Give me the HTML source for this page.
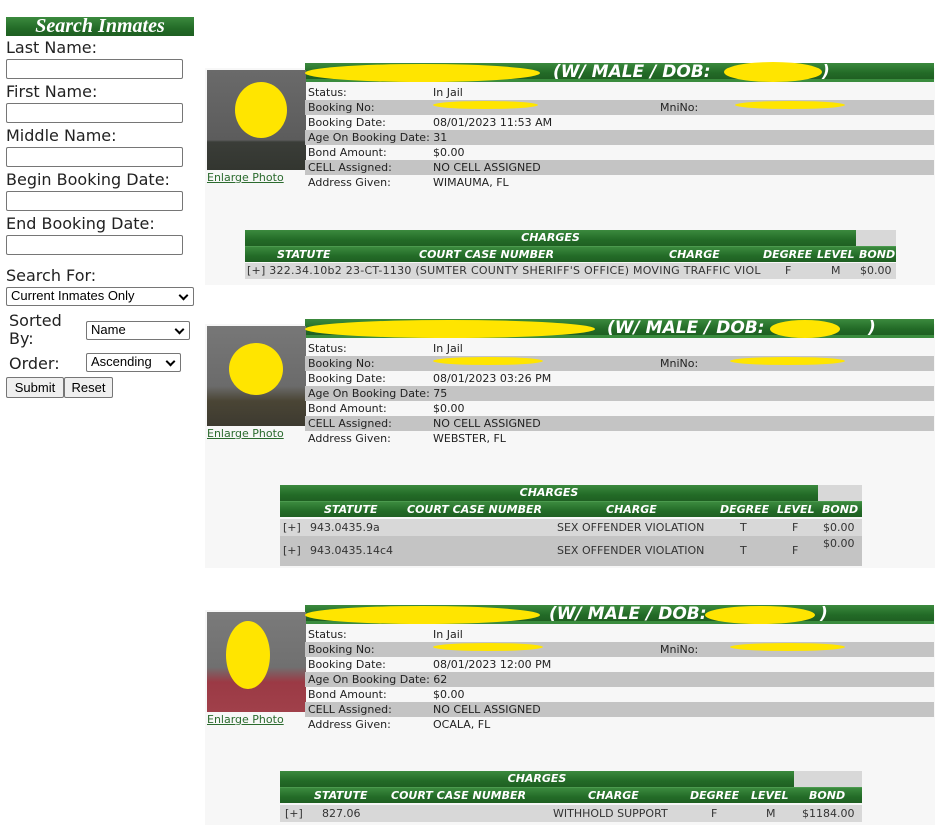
<!DOCTYPE html>
<html><head><meta charset="utf-8"><style>
*{margin:0;padding:0;box-sizing:border-box}
body{width:945px;height:825px;position:relative;background:#fff;font-family:"DejaVu Sans","Liberation Sans",sans-serif;overflow:hidden}
.a{position:absolute}
.lbl{position:absolute;left:6px;font-family:"DejaVu Sans",sans-serif;font-size:16px;color:#222}
.inp{position:absolute;left:6px;width:177px;height:20px;border:1px solid #767676;border-radius:2px;background:#fff}
.sel{position:absolute;border:1px solid #767676;border-radius:2px;background:#fff;font-family:"Liberation Sans",sans-serif;font-size:13px;padding-left:4px;line-height:16px;color:#000}
.sel:after{content:"";position:absolute;right:6px;top:4px;width:5px;height:5px;border-right:2px solid #000;border-bottom:2px solid #000;transform:rotate(45deg)}
.btn{position:absolute;top:377px;height:21px;border:1px solid #767676;border-radius:2px;background:#efefef;font-family:"Liberation Sans",sans-serif;font-size:13px;line-height:19px;text-align:center}
.green{background:linear-gradient(#3b8a3e,#236b27 60%,#1f5f22);}
.hdr{position:absolute;left:305px;width:629px;height:19px;border-bottom:3px solid #3a8c3e;}
.hdrt{position:absolute;color:#fff;font-weight:bold;font-style:italic;font-size:17px;font-family:"DejaVu Sans",sans-serif;top:-1px}
.panel{position:absolute;left:205px;width:730px;background:#f7f7f7}
.row{position:absolute;left:305px;width:629px;height:15px;font-size:11px;color:#222;line-height:15px}
.row.g{background:#c4c4c4}
.row span{position:absolute}
.photo{position:absolute;left:207px;width:99px;height:100px}
.link{position:absolute;left:207px;font-size:11px;color:#2b6b2e;text-decoration:underline}
.blob{position:absolute;background:#ffe500;border-radius:50%}
.ct{position:absolute;font-size:11px;color:#333}
.ct .h1{position:absolute;left:0;height:16px;color:#fff;font-weight:bold;font-style:italic;text-align:center;line-height:16px;font-size:11px}
.ct .h2{position:absolute;left:0;height:16px;color:#fff;font-weight:bold;font-style:italic;line-height:16px;font-size:11px;border-top:1px solid #4b9a4e}
.ct span{position:absolute}
</style></head><body>

<div class="a green" style="left:6px;top:17px;width:188px;height:19px;color:#fff;font-family:'Liberation Serif',serif;font-weight:bold;font-style:italic;font-size:20px;text-align:center;line-height:19px">Search Inmates</div>
<div class="lbl" style="top:38px">Last Name:</div>
<div class="inp" style="top:59px"></div>
<div class="lbl" style="top:82px">First Name:</div>
<div class="inp" style="top:103px"></div>
<div class="lbl" style="top:126px">Middle Name:</div>
<div class="inp" style="top:147px"></div>
<div class="lbl" style="top:170px">Begin Booking Date:</div>
<div class="inp" style="top:191px"></div>
<div class="lbl" style="top:214px">End Booking Date:</div>
<div class="inp" style="top:235px"></div>
<div class="lbl" style="top:266px">Search For:</div>
<div class="sel" style="left:6px;top:287px;width:188px;height:19px">Current Inmates Only</div>
<div class="lbl" style="top:312px;left:9px;line-height:18px">Sorted<br>By:</div>
<div class="sel" style="left:86px;top:321px;width:104px;height:19px">Name</div>
<div class="lbl" style="top:354px;left:9px">Order:</div>
<div class="sel" style="left:86px;top:353px;width:95px;height:19px">Ascending</div>
<div class="btn" style="left:6px;width:58px">Submit</div>
<div class="btn" style="left:64px;width:49px">Reset</div>

<div class="panel" style="top:68px;height:217px"></div>
<div class="panel" style="top:324px;height:244px"></div>
<div class="panel" style="top:610px;height:215px"></div>

<div class="hdr green" style="top:63px"><div class="hdrt" style="left:248px">(W/ MALE / DOB:</div><div class="hdrt" style="left:517px">)</div></div>
<div class="photo" style="top:70px;background:linear-gradient(#6a6a6a,#5c5c5c 70%,#3a3d38 72%,#333630)"></div>
<div class="blob" style="left:235px;top:82px;width:52px;height:56px"></div>
<div class="link" style="top:171px">Enlarge Photo</div>
<div class="row" style="top:85px"><span style="left:3px">Status:</span><span style="left:128px">In Jail</span></div>
<div class="row g" style="top:100px"><span style="left:3px">Booking No:</span><span style="left:355px">MniNo:</span></div>
<div class="row" style="top:115px"><span style="left:3px">Booking Date:</span><span style="left:128px">08/01/2023 11:53 AM</span></div>
<div class="row g" style="top:130px"><span style="left:3px">Age On Booking Date: 31</span></div>
<div class="row" style="top:145px"><span style="left:3px">Bond Amount:</span><span style="left:128px">$0.00</span></div>
<div class="row g" style="top:160px"><span style="left:3px">CELL Assigned:</span><span style="left:128px">NO CELL ASSIGNED</span></div>
<div class="row" style="top:175px"><span style="left:3px">Address Given:</span><span style="left:128px">WIMAUMA, FL</span></div>
<div class="blob" style="left:305px;top:64px;width:235px;height:18px"></div>
<div class="blob" style="left:724px;top:62px;width:98px;height:20px"></div>
<div class="blob" style="left:433px;top:101px;width:105px;height:8px"></div>
<div class="blob" style="left:735px;top:101px;width:110px;height:8px"></div>

<div class="ct" style="left:245px;top:230px;width:651px;height:50px">
 <div class="h1 green" style="width:611px">CHARGES</div><div style="position:absolute;left:611px;width:40px;height:16px;background:#d8d8d8"></div>
 <div class="h2 green" style="top:16px;width:651px"><span style="left:32px">STATUTE</span><span style="left:174px">COURT CASE NUMBER</span><span style="left:424px">CHARGE</span><span style="left:518px">DEGREE</span><span style="left:572px">LEVEL</span><span style="left:614px">BOND</span></div>
 <div style="position:absolute;top:33px;width:651px;height:16px;background:#d8d8d8;line-height:16px"><span style="left:2px;letter-spacing:0.25px">[+] 322.34.10b2 23-CT-1130 (SUMTER COUNTY SHERIFF'S OFFICE) MOVING TRAFFIC VIOL</span><span style="left:540px">F</span><span style="left:586px">M</span><span style="left:615px">$0.00</span></div>
</div>

<div class="hdr green" style="top:319px"><div class="hdrt" style="left:302px">(W/ MALE / DOB:</div><div class="hdrt" style="left:563px">)</div></div>
<div class="photo" style="top:326px;background:linear-gradient(#777,#6b6b6b 60%,#4a4535 75%,#3d3a30)"></div>
<div class="blob" style="left:229px;top:343px;width:54px;height:52px"></div>
<div class="link" style="top:427px">Enlarge Photo</div>
<div class="row" style="top:341px"><span style="left:3px">Status:</span><span style="left:128px">In Jail</span></div>
<div class="row g" style="top:356px"><span style="left:3px">Booking No:</span><span style="left:355px">MniNo:</span></div>
<div class="row" style="top:371px"><span style="left:3px">Booking Date:</span><span style="left:128px">08/01/2023 03:26 PM</span></div>
<div class="row g" style="top:386px"><span style="left:3px">Age On Booking Date: 75</span></div>
<div class="row" style="top:401px"><span style="left:3px">Bond Amount:</span><span style="left:128px">$0.00</span></div>
<div class="row g" style="top:416px"><span style="left:3px">CELL Assigned:</span><span style="left:128px">NO CELL ASSIGNED</span></div>
<div class="row" style="top:431px"><span style="left:3px">Address Given:</span><span style="left:128px">WEBSTER, FL</span></div>
<div class="blob" style="left:305px;top:320px;width:290px;height:18px"></div>
<div class="blob" style="left:770px;top:320px;width:70px;height:18px"></div>
<div class="blob" style="left:433px;top:357px;width:110px;height:8px"></div>
<div class="blob" style="left:730px;top:357px;width:115px;height:8px"></div>

<div class="ct" style="left:280px;top:485px;width:582px;height:81px">
 <div class="h1 green" style="width:538px">CHARGES</div><div style="position:absolute;left:538px;width:44px;height:16px;background:#d8d8d8"></div>
 <div class="h2 green" style="top:16px;width:582px"><span style="left:44px">STATUTE</span><span style="left:127px">COURT CASE NUMBER</span><span style="left:326px">CHARGE</span><span style="left:440px">DEGREE</span><span style="left:497px">LEVEL</span><span style="left:542px">BOND</span></div>
 <div style="position:absolute;top:34px;width:582px;height:17px;background:#d8d8d8;line-height:17px"><span style="left:3px">[+]</span><span style="left:30px">943.0435.9a</span><span style="left:277px">SEX OFFENDER VIOLATION</span><span style="left:460px">T</span><span style="left:512px">F</span><span style="left:543px">$0.00</span></div>
 <div style="position:absolute;top:51px;width:582px;height:30px;background:#c4c4c4;line-height:30px"><span style="left:3px">[+]</span><span style="left:30px">943.0435.14c4</span><span style="left:277px">SEX OFFENDER VIOLATION</span><span style="left:460px">T</span><span style="left:512px">F</span><span style="left:543px;top:-7px">$0.00</span></div>
</div>

<div class="hdr green" style="top:605px"><div class="hdrt" style="left:244px">(W/ MALE / DOB:</div><div class="hdrt" style="left:515px">)</div></div>
<div class="photo" style="top:612px;background:linear-gradient(#7a7a7a,#707070 55%,#9b3a45 70%,#a0404a)"></div>
<div class="blob" style="left:226px;top:621px;width:44px;height:68px"></div>
<div class="link" style="top:713px">Enlarge Photo</div>
<div class="row" style="top:627px"><span style="left:3px">Status:</span><span style="left:128px">In Jail</span></div>
<div class="row g" style="top:642px"><span style="left:3px">Booking No:</span><span style="left:355px">MniNo:</span></div>
<div class="row" style="top:657px"><span style="left:3px">Booking Date:</span><span style="left:128px">08/01/2023 12:00 PM</span></div>
<div class="row g" style="top:672px"><span style="left:3px">Age On Booking Date: 62</span></div>
<div class="row" style="top:687px"><span style="left:3px">Bond Amount:</span><span style="left:128px">$0.00</span></div>
<div class="row g" style="top:702px"><span style="left:3px">CELL Assigned:</span><span style="left:128px">NO CELL ASSIGNED</span></div>
<div class="row" style="top:717px"><span style="left:3px">Address Given:</span><span style="left:128px">OCALA, FL</span></div>
<div class="blob" style="left:305px;top:606px;width:235px;height:18px"></div>
<div class="blob" style="left:705px;top:606px;width:110px;height:18px"></div>
<div class="blob" style="left:433px;top:643px;width:110px;height:8px"></div>
<div class="blob" style="left:730px;top:643px;width:115px;height:8px"></div>

<div class="ct" style="left:280px;top:771px;width:582px;height:51px">
 <div class="h1 green" style="width:514px">CHARGES</div><div style="position:absolute;left:514px;width:68px;height:16px;background:#d8d8d8"></div>
 <div class="h2 green" style="top:16px;width:582px"><span style="left:34px">STATUTE</span><span style="left:111px">COURT CASE NUMBER</span><span style="left:308px">CHARGE</span><span style="left:410px">DEGREE</span><span style="left:471px">LEVEL</span><span style="left:529px">BOND</span></div>
 <div style="position:absolute;top:34px;width:582px;height:17px;background:#d8d8d8;line-height:17px"><span style="left:5px">[+]</span><span style="left:42px">827.06</span><span style="left:273px">WITHHOLD SUPPORT</span><span style="left:431px">F</span><span style="left:486px">M</span><span style="left:522px">$1184.00</span></div>
</div>
</body></html>
